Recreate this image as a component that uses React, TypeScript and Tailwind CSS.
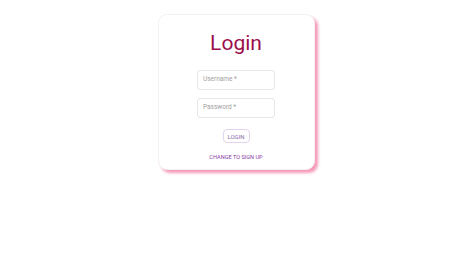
export default function App() {
  return (
    <div className="w-[474px] h-[262px] bg-white flex justify-center pt-[14px]" style={{ fontFamily: 'Roboto, "Liberation Sans", Arial, sans-serif' }}>
      <div className="w-[157px] h-[156px] mr-[2px] bg-white rounded-[9px] border border-[#f5f0f2] shadow-[3px_3px_3px_rgba(244,143,177,0.9)] flex flex-col items-center">
        <h1 className="mt-[14px] text-[21px] leading-[28px] text-[#9b0f4b] font-normal">Login</h1>
        <div className="mt-[13px] w-[78px] h-[20px] border border-[#e6e6e6] rounded-[3px] flex items-center px-[5px] text-[6.5px] text-[#a0a0a0]">Username *</div>
        <div className="mt-[8px] w-[78px] h-[20px] border border-[#e6e6e6] rounded-[3px] flex items-center px-[5px] text-[6.5px] text-[#a0a0a0]">Password *</div>
        <div className="mt-[11px] w-[27px] h-[14px] border border-[#e2d4ee] rounded-[4px] flex items-center justify-center text-[6px] text-[#8e6aa8]">LOGIN</div>
        <div className="mt-[10px] text-[5.6px] text-[#8a3aa5]">CHANGE TO SIGN UP</div>
      </div>
    </div>
  );
}
